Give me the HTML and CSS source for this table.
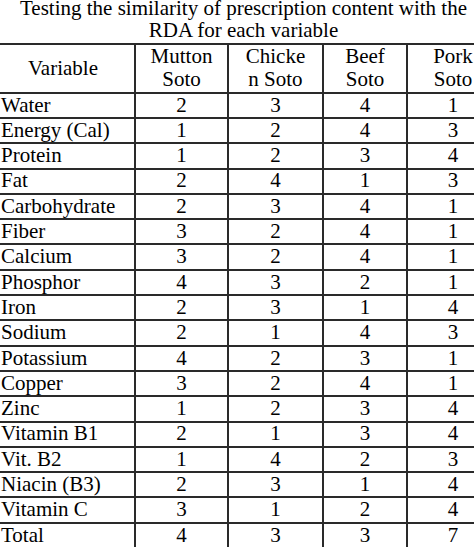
FILE: index.html
```html
<!DOCTYPE html>
<html>
<head>
<meta charset="utf-8">
<link rel="stylesheet" href="styles.css">
</head>
<body>
<div class="page">
  <div class="caption">Testing the similarity of prescription content with the<br>RDA for each variable</div>
  <div class="grid">
    <div class="cell head first">Variable</div>
    <div class="cell head">Mutton<br>Soto</div>
    <div class="cell head">Chicke<br>n Soto</div>
    <div class="cell head">Beef<br>Soto</div>
    <div class="cell head">Pork<br>Soto</div>

    <div class="cell first">Water</div><div class="cell">2</div><div class="cell">3</div><div class="cell">4</div><div class="cell">1</div>
    <div class="cell first">Energy (Cal)</div><div class="cell">1</div><div class="cell">2</div><div class="cell">4</div><div class="cell">3</div>
    <div class="cell first">Protein</div><div class="cell">1</div><div class="cell">2</div><div class="cell">3</div><div class="cell">4</div>
    <div class="cell first">Fat</div><div class="cell">2</div><div class="cell">4</div><div class="cell">1</div><div class="cell">3</div>
    <div class="cell first">Carbohydrate</div><div class="cell">2</div><div class="cell">3</div><div class="cell">4</div><div class="cell">1</div>
    <div class="cell first">Fiber</div><div class="cell">3</div><div class="cell">2</div><div class="cell">4</div><div class="cell">1</div>
    <div class="cell first">Calcium</div><div class="cell">3</div><div class="cell">2</div><div class="cell">4</div><div class="cell">1</div>
    <div class="cell first">Phosphor</div><div class="cell">4</div><div class="cell">3</div><div class="cell">2</div><div class="cell">1</div>
    <div class="cell first">Iron</div><div class="cell">2</div><div class="cell">3</div><div class="cell">1</div><div class="cell">4</div>
    <div class="cell first">Sodium</div><div class="cell">2</div><div class="cell">1</div><div class="cell">4</div><div class="cell">3</div>
    <div class="cell first">Potassium</div><div class="cell">4</div><div class="cell">2</div><div class="cell">3</div><div class="cell">1</div>
    <div class="cell first">Copper</div><div class="cell">3</div><div class="cell">2</div><div class="cell">4</div><div class="cell">1</div>
    <div class="cell first">Zinc</div><div class="cell">1</div><div class="cell">2</div><div class="cell">3</div><div class="cell">4</div>
    <div class="cell first">Vitamin B1</div><div class="cell">2</div><div class="cell">1</div><div class="cell">3</div><div class="cell">4</div>
    <div class="cell first">Vit. B2</div><div class="cell">1</div><div class="cell">4</div><div class="cell">2</div><div class="cell">3</div>
    <div class="cell first">Niacin (B3)</div><div class="cell">2</div><div class="cell">3</div><div class="cell">1</div><div class="cell">4</div>
    <div class="cell first">Vitamin C</div><div class="cell">3</div><div class="cell">1</div><div class="cell">2</div><div class="cell">4</div>
    <div class="cell first">Total</div><div class="cell">4</div><div class="cell">3</div><div class="cell">3</div><div class="cell">7</div>
  </div>
</div>
</body>
</html>
```
FILE: styles.css
```css
html, body {
  margin: 0;
  padding: 0;
  background: #ffffff;
  overflow: hidden;
}

.page {
  width: 508px;
  margin-left: -10px;
  font-family: "Liberation Serif", "Times New Roman", serif;
  font-size: 21px;
  color: #000000;
}

.caption {
  width: 487px;
  margin-left: 10px;
  text-align: center;
  line-height: 22.5px;
  margin-top: -3.5px;
  height: 46.5px;
  white-space: nowrap;
}

.grid {
  display: grid;
  grid-template-columns: 144px 93px 95px 84px 92px;
  grid-template-rows: 48.7px;
  grid-auto-rows: 25.3px;
}

.cell {
  box-sizing: border-box;
  border-top: 2px solid #2a2a2a;
  border-left: 2px solid #2a2a2a;
  display: flex;
  align-items: center;
  justify-content: center;
  text-align: center;
  line-height: 23.5px;
  white-space: nowrap;
}

.cell.first {
  justify-content: flex-start;
  padding-left: 9px;
}

.cell.head.first {
  justify-content: center;
  padding-left: 0;
}
```
